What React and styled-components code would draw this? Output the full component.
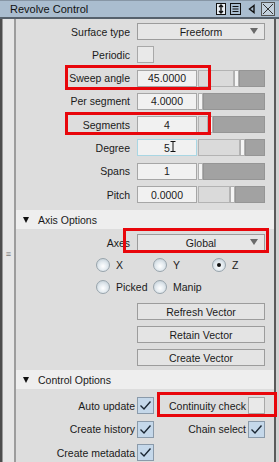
import React from "react";
import styled, { createGlobalStyle } from "styled-components";

const Global = createGlobalStyle`
  html, body { margin: 0; padding: 0; background: #d4d4d4; }
  body { font-family: "Liberation Sans", Arial, sans-serif; font-size: 10.5px; color: #1a1a1a; }
`;

const Window = styled.div`
  position: relative;
  width: 279px;
  height: 462px;
  display: flex;
  flex-direction: column;
  background: #d6d6d6;
  overflow: hidden;
`;

const TitleBar = styled.div`
  height: 16px;
  display: flex;
  align-items: center;
  padding: 0 4px 0 10px;
  background: #aabdcf;
  border-top: 1px solid #8796a5;
  border-bottom: 2px solid #56616c;
  font-size: 11px;
  color: #111;
`;

const Title = styled.div`
  flex: 1;
`;

const TitleIcons = styled.div`
  display: flex;
  align-items: center;
  gap: 4px;
`;

const Body = styled.div`
  flex: 1;
  display: flex;
  border-left: 2px solid #4d4d4d;
`;

const Strip = styled.div`
  width: 11px;
  background: #e6e6e6;
  border-left: 1px solid #9a9a9a;
  border-right: 2px solid #9c9c9c;
  display: flex;
  align-items: flex-start;
  justify-content: center;
  padding-top: 230px;
  color: #777;
  font-size: 9px;
`;

const Content = styled.div`
  flex: 1;
  background: #dddddd;
  border-right: 2px solid #5a5a5a;
  display: flex;
  flex-direction: column;
  padding-top: 4px;
`;

const RightEdge = styled.div`
  width: 3px;
  background: #d2d2d2;
`;

const Rows = styled.div`
  display: flex;
  flex-direction: column;
  gap: 6.3px;
`;

const Row = styled.div`
  display: grid;
  grid-template-columns: 114px 128px;
  column-gap: 7px;
  align-items: center;
  height: 17px;
`;

const Label = styled.div`
  text-align: right;
  white-space: nowrap;
`;

const Dropdown = styled.div`
  height: 15px;
  border: 1px solid #9c9c9c;
  background: #e6e6e6;
  display: flex;
  align-items: center;
  justify-content: center;
  position: relative;
`;

const Arrow = styled.span`
  position: absolute;
  right: 6px;
  top: 4px;
  width: 0;
  height: 0;
  border-left: 4px solid transparent;
  border-right: 4px solid transparent;
  border-top: 6px solid #6a6a6a;
`;

const Check = styled.div`
  width: 15px;
  height: 15px;
  border: 1px solid ${(p) => (p.on ? "#8a9aaa" : "#a8a8a8")};
  background: ${(p) => (p.on ? "#c5d8ea" : "#e9e9e9")};
  display: flex;
  align-items: center;
  justify-content: center;
`;

const FieldGroup = styled.div`
  display: flex;
  height: 17px;
  gap: 1px;
`;

const Field = styled.div`
  width: 58px;
  height: 15px;
  border: 1px solid ${(p) => (p.focus ? "#a9d6e3" : "#a6a6a6")};
  background: #f1f1f1;
  display: flex;
  align-items: center;
  justify-content: center;
  position: relative;
`;

const Slider = styled.div`
  flex: 1;
  display: flex;
  height: 17px;
`;

const Track = styled.div`
  height: 15px;
  border: 1px solid #b3b3b3;
  background: #dadada;
`;

const Thumb = styled.div`
  width: 3px;
  height: 15px;
  border: 1px solid #b0b0b0;
  background: #f5f5f5;
`;

const Dark = styled.div`
  flex: 1;
  height: 15px;
  border: 1px solid #959595;
  background: #a2a2a2;
`;

const Section = styled.div`
  height: 19px;
  background: #eeeeee;
  display: flex;
  align-items: center;
  gap: 9px;
  padding-left: 7px;
  margin: ${(p) => p.m || "0"};
`;

const Tri = styled.span`
  width: 0;
  height: 0;
  border-left: 3.5px solid transparent;
  border-right: 3.5px solid transparent;
  border-top: 6px solid #111;
`;

const RadioGrid = styled.div`
  display: grid;
  grid-template-columns: 57px 59px auto;
  row-gap: 8px;
  margin: 7px 0 0 80px;
`;

const RadioItem = styled.div`
  display: flex;
  align-items: center;
  gap: 6px;
  height: 14px;
`;

const Radio = styled.div`
  width: 12px;
  height: 12px;
  border-radius: 50%;
  border: 1px solid #98a4ac;
  background: radial-gradient(circle at 50% 60%, #ffffff 0%, #e3eaef 45%, #b9c6cf 100%);
  display: flex;
  align-items: center;
  justify-content: center;
`;

const Dot = styled.div`
  width: 4px;
  height: 4px;
  border-radius: 50%;
  background: #111;
`;

const Buttons = styled.div`
  display: flex;
  flex-direction: column;
  gap: 6px;
  margin: 9px 0 0 121px;
  width: 128px;
`;

const Button = styled.div`
  height: 15px;
  border: 1px solid #9c9c9c;
  background: #e4e4e4;
  display: flex;
  align-items: center;
  justify-content: center;
`;

const CheckGrid = styled.div`
  display: grid;
  grid-template-columns: 138px 111px;
  row-gap: 6.5px;
  margin-top: 8px;
`;

const CheckCell = styled.div`
  display: flex;
  align-items: center;
  justify-content: flex-end;
  gap: 2px;
  height: 17px;
`;

const Mark = styled.div`
  position: absolute;
  border: 3px solid #e8060b;
  pointer-events: none;
`;

const Tick = () => (
  <svg width="13" height="11" viewBox="0 0 13 11">
    <path d="M1.5 5.5 L5 9 L11.5 1.5" fill="none" stroke="#1b2733" strokeWidth="1.4" />
  </svg>
);

const SliderBar = ({ light }) => (
  <Slider>
    {light > 0 && <Track style={{ width: light }} />}
    <Thumb />
    <Dark />
  </Slider>
);

const NumRow = ({ label, value, light, focus }) => (
  <Row>
    <Label>{label}</Label>
    <FieldGroup>
      <Field focus={focus}>
        {value}
        {focus && (
          <svg width="6" height="11" viewBox="0 0 6 11" style={{ position: "absolute", left: 32, top: 1 }}>
            <path d="M0.5 0.5h5M3 0.5v10M0.5 10.5h5" stroke="#111" strokeWidth="1" fill="none" />
          </svg>
        )}
      </Field>
      <SliderBar light={light} />
    </FieldGroup>
  </Row>
);

export default function App() {
  return (
    <>
      <Global />
      <Window>
        <TitleBar>
          <Title>Revolve Control</Title>
          <TitleIcons>
            <svg width="10" height="12" viewBox="0 0 10 12">
              <rect x="0.5" y="0.5" width="9" height="11" fill="#e9eef3" stroke="#111" />
              <path d="M5 2v8M3 4l2-2 2 2M3 8l2 2 2-2" stroke="#111" strokeWidth="1.4" fill="none" />
            </svg>
            <svg width="11" height="12" viewBox="0 0 11 12">
              <rect x="0.5" y="0.5" width="10" height="11" fill="none" stroke="#111" />
              <path d="M2.5 3.5h6M2.5 6h6M2.5 8.5h6" stroke="#111" strokeWidth="1" />
            </svg>
            <svg width="10" height="12" viewBox="0 0 10 12" style={{ marginLeft: 2 }}>
              <path d="M7 2.5 L2.5 6 L7 9.5 Z" fill="none" stroke="#111" strokeWidth="1.4" />
            </svg>
            <svg width="14" height="14" viewBox="0 0 14 14">
              <rect x="0.5" y="0.5" width="13" height="13" fill="#c3d0dc" stroke="#555" />
              <path d="M2 2L12 12M12 2L2 12" stroke="#333" strokeWidth="1" />
            </svg>
          </TitleIcons>
        </TitleBar>
        <Body>
          <Strip>≡</Strip>
          <Content>
            <Rows>
              <Row>
                <Label>Surface type</Label>
                <Dropdown>
                  Freeform
                  <Arrow />
                </Dropdown>
              </Row>
              <Row>
                <Label>Periodic</Label>
                <Check />
              </Row>
              <NumRow label="Sweep angle" value="45.0000" light={34} />
              <NumRow label="Per segment" value="4.0000" light={0} />
              <NumRow label="Segments" value="4" light={8} />
              <NumRow label="Degree" value="5" light={40} focus />
              <NumRow label="Spans" value="1" light={0} />
              <NumRow label="Pitch" value="0.0000" light={30} />
            </Rows>
            <Section m="7px 0 5px 0">
              <Tri />
              Axis Options
            </Section>
            <Row>
              <Label>Axes</Label>
              <Dropdown>
                Global
                <Arrow />
              </Dropdown>
            </Row>
            <RadioGrid>
              <RadioItem>
                <Radio />X
              </RadioItem>
              <RadioItem>
                <Radio />Y
              </RadioItem>
              <RadioItem>
                <Radio>
                  <Dot />
                </Radio>
                Z
              </RadioItem>
              <RadioItem>
                <Radio />Picked
              </RadioItem>
              <RadioItem>
                <Radio />Manip
              </RadioItem>
            </RadioGrid>
            <Buttons>
              <Button>Refresh Vector</Button>
              <Button>Retain Vector</Button>
              <Button>Create Vector</Button>
            </Buttons>
            <Section m="4px 0 0 0">
              <Tri />
              Control Options
            </Section>
            <CheckGrid>
              <CheckCell>
                Auto update
                <Check on>
                  <Tick />
                </Check>
              </CheckCell>
              <CheckCell>
                Continuity check
                <Check />
              </CheckCell>
              <CheckCell>
                Create history
                <Check on>
                  <Tick />
                </Check>
              </CheckCell>
              <CheckCell>
                Chain select
                <Check on>
                  <Tick />
                </Check>
              </CheckCell>
              <CheckCell>
                Create metadata
                <Check on>
                  <Tick />
                </Check>
              </CheckCell>
            </CheckGrid>
          </Content>
          <RightEdge />
        </Body>
        <Mark style={{ left: 65, top: 65, width: 140, height: 19 }} />
        <Mark style={{ left: 65, top: 112, width: 140, height: 17 }} />
        <Mark style={{ left: 123, top: 228, width: 140, height: 19 }} />
        <Mark style={{ left: 157, top: 392, width: 114, height: 19 }} />
      </Window>
    </>
  );
}
